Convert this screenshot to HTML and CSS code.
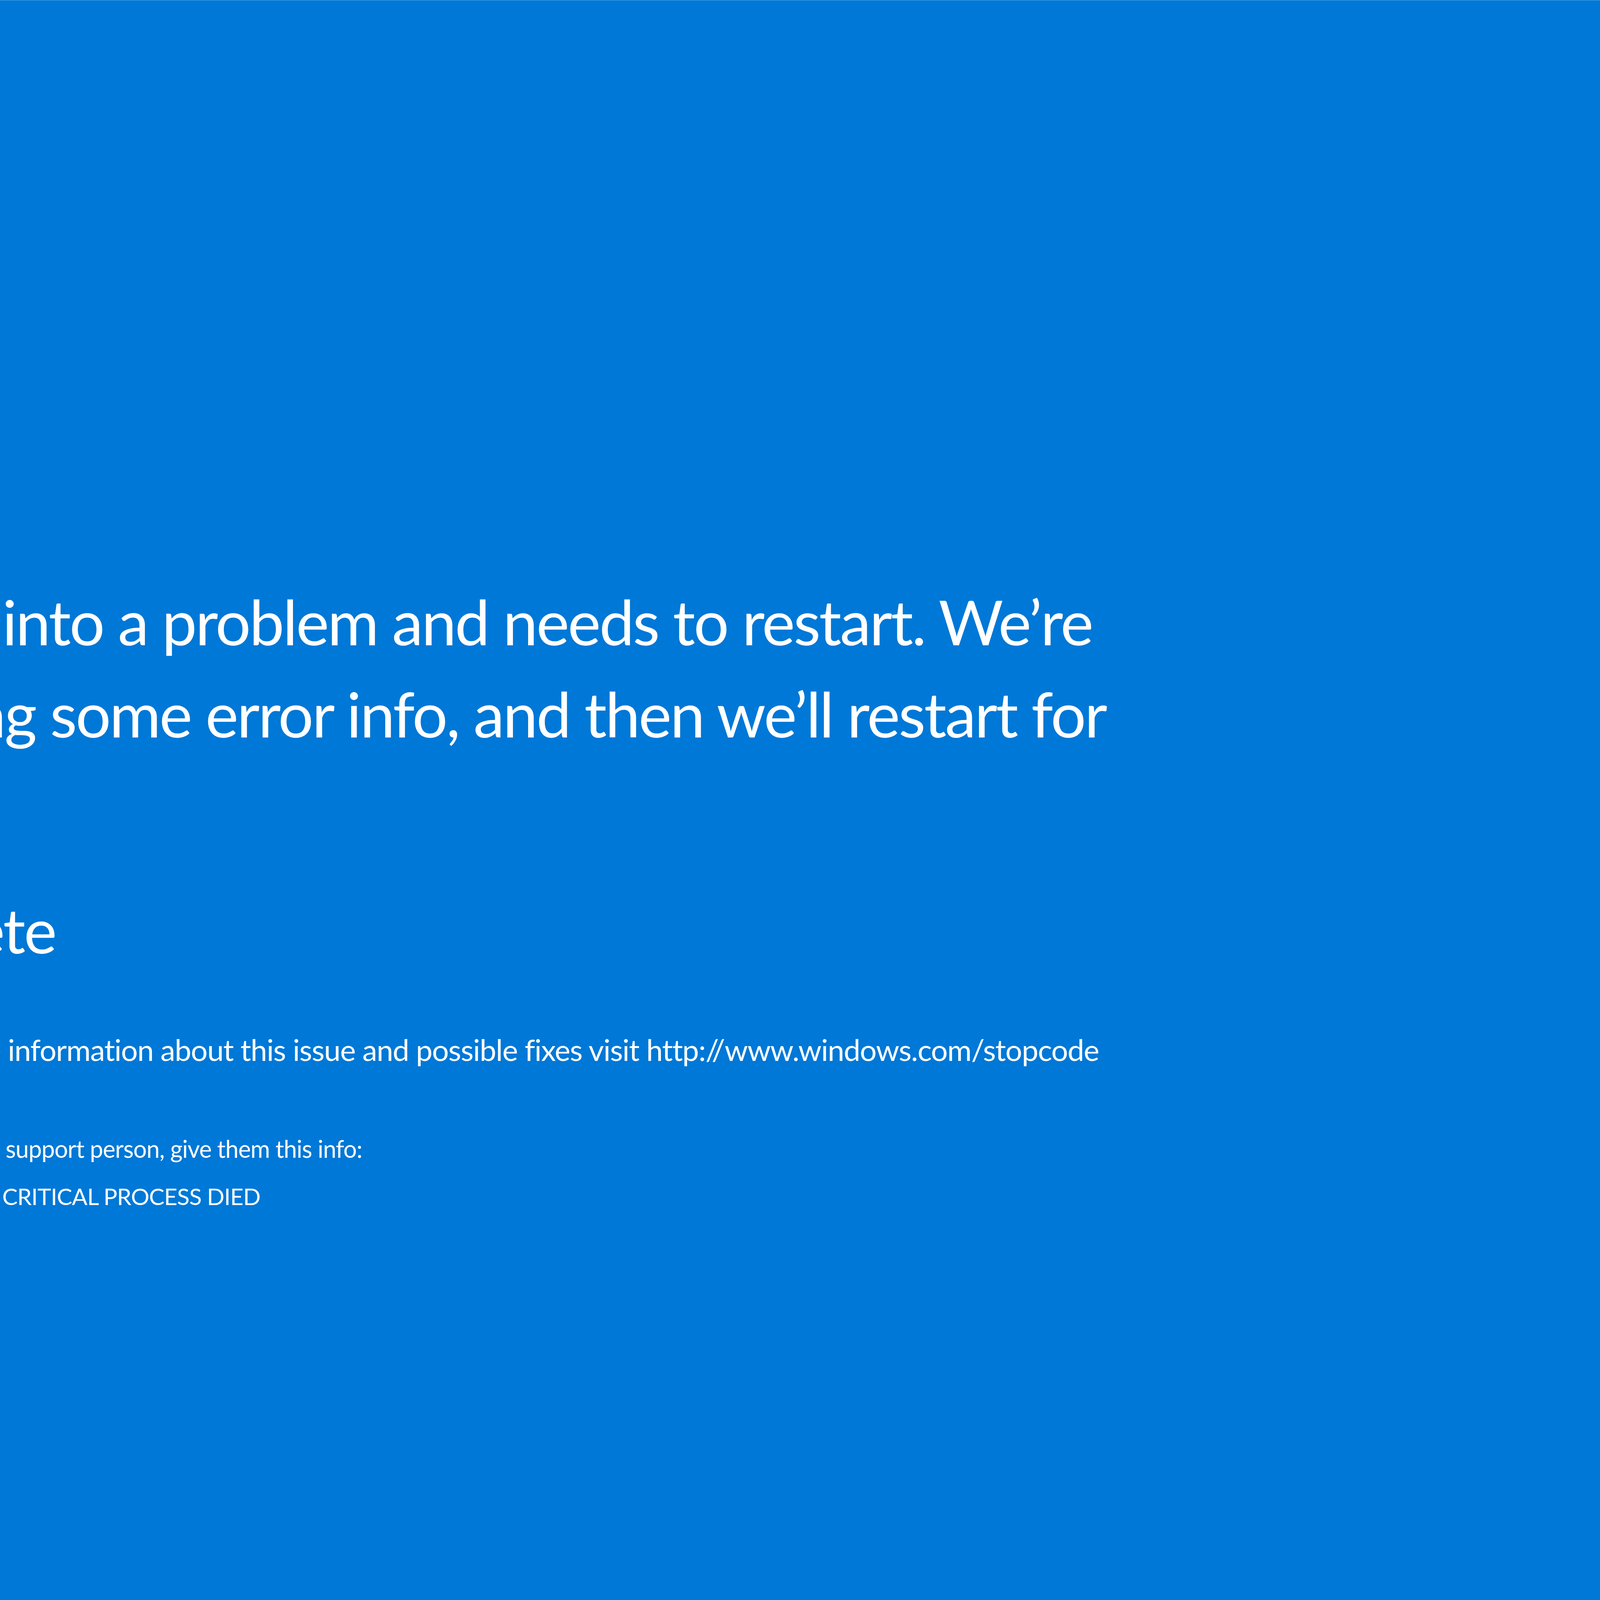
FILE: index.html
```html
<!DOCTYPE HTML>
<html>
<head>
    <meta name="viewport" content="width=device-width, height=device-height, initial-scale=1.0">
    <link rel="stylesheet" href="styles.css">
</head>
<body>
    <div class="screen">
        <div class="content">
            <div class="face">:(</div>
            <p class="message">Your PC ran into a problem and needs to restart. We’re<br>just collecting some error info, and then we’ll restart for<br>you.</p>
            <p class="progress">20% complete</p>
            <div class="details">
                <div class="qr">
                    <svg viewBox="0 0 25 25" width="470" height="470">
                        <rect width="25" height="25" fill="#fff"/>
                        <path fill="#0078d7" d="M1 1h7v7H1zM17 1h7v7h-7zM1 17h7v7H1z"/>
                        <path fill="#fff" d="M2 2h5v5H2zM18 2h5v5h-5zM2 18h5v5H2z"/>
                        <path fill="#0078d7" d="M3 3h3v3H3zM19 3h3v3h-3zM3 19h3v3H3zM10 2h2v2h-2zM13 4h2v3h-2zM10 9h3v2h-3zM15 10h3v3h-3zM20 10h3v2h-3zM9 14h2v3H9zM12 13h2v2h-2zM18 15h3v2h-3zM11 19h3v3h-3zM16 18h2v4h-2zM20 20h3v3h-3z"/>
                    </svg>
                </div>
                <div class="info">
                    <p class="more">For more information about this issue and possible fixes visit http://www.windows.com/stopcode</p>
                    <p class="support">If you call a support person, give them this info:</p>
                    <p class="stopcode"><span class="label">Stop code:</span> <span class="code">CRITICAL PROCESS DIED</span></p>
                </div>
            </div>
        </div>
    </div>
</body>
</html>
```

FILE: styles.css
```css
* {
    padding: 0;
    margin: 0;
}
body {
    background-color: #0078d7;
}
.screen {
    width: 100vw;
    height: 100vh;
    overflow: hidden;
    background-color: #0078d7;
    border-top: 1px solid #5aaaeb;
    box-sizing: border-box;
    color: #fff;
    font-family: Lato, "Open Sans", sans-serif;
    font-variant-ligatures: none;
}
.content {
    margin-left: -817px;
    padding-top: 700px;
    white-space: nowrap;
}
.face {
    font-size: 480px;
    line-height: 600px;
    height: 600px;
}
.message {
    margin-top: 171px;
    font-size: 160px;
    line-height: 236px;
    letter-spacing: -0.024em;
}
.progress {
    margin-top: 81px;
    font-size: 160px;
    line-height: 236px;
    letter-spacing: -0.024em;
}
.details {
    display: flex;
    margin-top: 135px;
}
.qr {
    width: 470px;
    height: 470px;
    margin-right: 59px;
    flex-shrink: 0;
}
.more {
    font-size: 76px;
    line-height: 110px;
    letter-spacing: -0.017em;
}
.support {
    margin-top: 159px;
    font-size: 61px;
    line-height: 80px;
    letter-spacing: -0.015em;
}
.stopcode {
    margin-top: 42px;
    font-size: 59px;
    line-height: 80px;
    letter-spacing: -0.015em;
}
.stopcode .label {
    margin-right: 15px;
}
```
